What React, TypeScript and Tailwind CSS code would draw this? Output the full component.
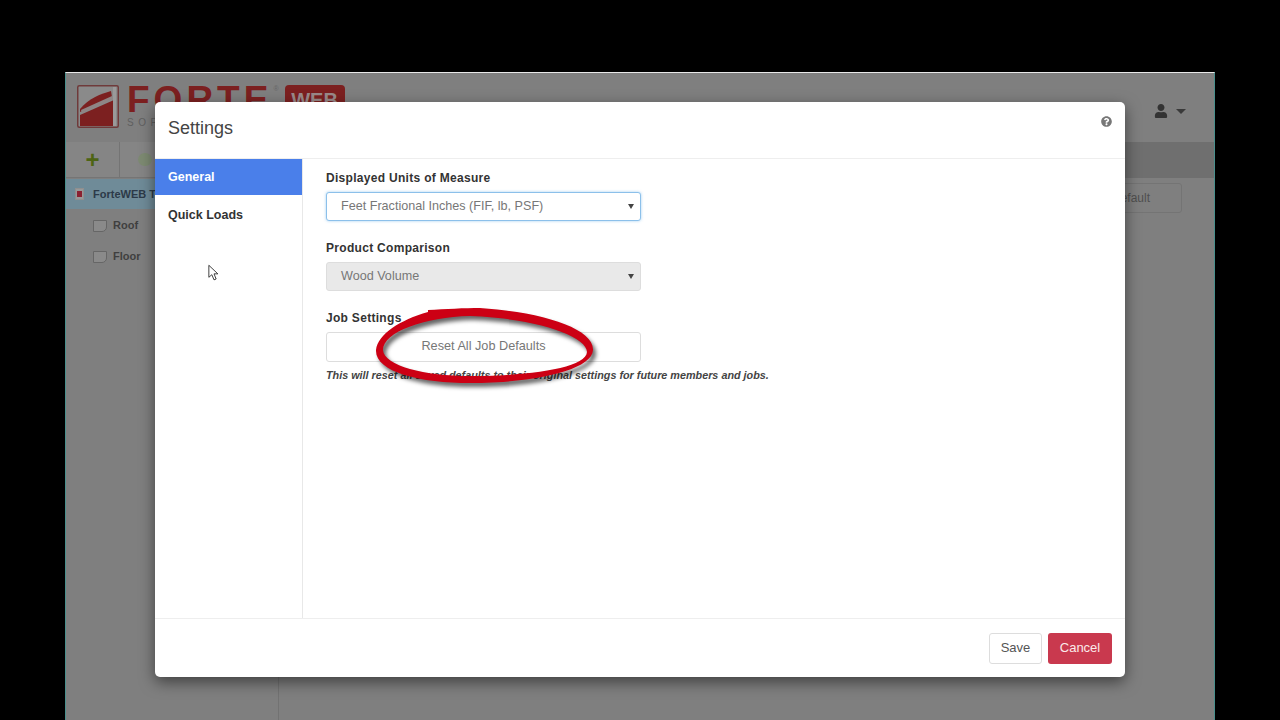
import { FaQuestionCircle, FaUser } from "react-icons/fa";

const font = "font-['Liberation_Sans',Arial,sans-serif]";

function Logo() {
  return (
    <svg width="42" height="43" viewBox="0 0 42 43" className="shrink-0">
      <rect x="0.75" y="0.75" width="40.5" height="41.5" rx="1.5" fill="#8a8a8a" stroke="#6f3a3a" strokeWidth="1.5" />
      <path d="M3 41V30L37 15v26z" fill="#7c2020" />
      <path d="M3 24C12 13 24 9 34 6l1 6L3 27z" fill="#7c2020" />
      <path d="M4 25L35 11l1 3L5 28z" fill="#8f8585" />
      <path d="M36 2h3v39h-3z" fill="#9a9a9a" />
    </svg>
  );
}

function PageIcon() {
  return (
    <span className="flex h-[12px] w-[9px] items-center justify-center border border-[#8f8f8f] bg-[#999]">
      <span className="h-[6px] w-[5px] bg-[#8a2030]" />
    </span>
  );
}

function TreeRow({ label }: { label: string }) {
  return (
    <div className="flex h-[31px] items-center gap-[6px] pl-[27px] text-[11px] font-bold text-[#3f3f3f]">
      <span className="h-[12px] w-[14px] rounded-br-[5px] border border-[#666] bg-[#8a8a8a]" />
      {label}
    </div>
  );
}

function FieldLabel({ children }: { children: string }) {
  return <div className="text-[12px] font-bold leading-[14px] tracking-[0.3px] text-[#333]">{children}</div>;
}

function SelectBox({ value, focused }: { value: string; focused?: boolean }) {
  return (
    <div
      className={
        focused
          ? "mt-[7px] flex h-[29px] w-[315px] items-center justify-between rounded-[3px] border border-[#8cc0ea] bg-white pl-[14px] pr-[6px] shadow-[0_0_3px_rgba(102,175,233,0.6)]"
          : "mt-[7px] flex h-[29px] w-[315px] items-center justify-between rounded-[3px] border border-[#ddd] bg-[#e9e9e9] pl-[14px] pr-[6px]"
      }
    >
      <span className="text-[12.6px] text-[#777]">{value}</span>
      <span className="h-0 w-0 border-x-[3px] border-t-[5px] border-x-transparent border-t-[#444]" />
    </div>
  );
}

// hand-drawn red ring around the reset button
function Ellipse() {
  return (
    <svg
      width="235"
      height="90"
      viewBox="0 0 235 90"
      className="absolute left-[44px] top-[-32px] drop-shadow-[3px_4px_2px_rgba(0,0,0,0.6)]"
    >
      <path
        fillRule="evenodd"
        fill="#cc0014"
        d="M6 50C8 34 30 20 58 12L58 10C75 9 95 8 110 8C170 12 224 28 223 50C222 70 165 83 100 83C50 83 5 72 6 50ZM13 50C14 66 55 76 100 76C160 76 216 68 217 52C217 36 165 18 100 16C55 17 13 32 13 50Z"
      />
    </svg>
  );
}

export default function App() {
  return (
    <div className={`${font} h-[720px] w-[1280px] overflow-hidden bg-black pl-[65px] pr-[65px] pt-[72px]`}>
      <div className="relative h-[648px] w-[1150px] border-x border-t border-x-[#4a8f8c] border-t-[#e8e8e8] bg-[#7f7f7f]">
        <header className="flex h-[69px] items-start pl-[11px] pt-[12px]">
          <Logo />
          <div className="ml-[8px]">
            <div className="text-[37px] font-bold leading-[30px] tracking-[4px] text-[#7c2020]">FORTE</div>
            <div className="mt-[3px] text-[10px] leading-[10px] tracking-[4.5px] text-[#5f5f5f]">SOFTWARE</div>
          </div>
          <div className="ml-[1px] text-[7px] leading-[8px] text-[#666]">®</div>
          <div className="ml-[6px] h-[30px] w-[60px] rounded-[4px] bg-[#7c2020] text-center text-[20px] font-bold leading-[30px] text-[#9a8a8a]">
            WEB
          </div>
          <div className="ml-auto mr-[28px] mt-[19px] flex items-center gap-[8px]">
            <FaUser size={14} className="text-[#333]" />
            <span className="h-0 w-0 border-x-[5.5px] border-t-[5px] border-x-transparent border-t-[#3a3a3a]" />
          </div>
        </header>

        <div className="flex h-[36px]">
          <div className="flex h-full w-[213px] items-center border-b border-[#757575] bg-[#858585]">
            <div className="flex h-full w-[54px] items-center justify-center border-r border-[#747474] text-[24px] font-bold leading-none text-[#4d6414]">
              +
            </div>
            <div className="ml-[18px] h-[13px] w-[14px] rounded-full bg-[#7d8a72]" />
          </div>
          <div className="flex-1 bg-[#6f6f6f]" />
        </div>

        <div className="w-[213px]">
          <div className="mt-px flex h-[30px] items-center gap-[9px] bg-[#6f8b98] pl-[9px] text-[11px] font-bold text-[#2c3a48]">
            <PageIcon />
            ForteWEB Training
          </div>
          <div className="pt-px">
            <TreeRow label="Roof" />
            <TreeRow label="Floor" />
          </div>
        </div>

        <div className="absolute bottom-0 left-[212px] h-[44px] w-px bg-[#727272]" />

        <div className="absolute right-[32px] top-[110px] flex h-[30px] w-[90px] items-center justify-end rounded-[3px] border border-[#747474] pr-[31px] text-[12px] text-[#4f4f4f]">
          Default
        </div>

        <div className="absolute left-[89px] top-[29px] flex h-[575px] w-[970px] flex-col overflow-hidden rounded-[5px] bg-white shadow-[0_5px_15px_rgba(0,0,0,0.5)]">
          <div className="flex h-[57px] shrink-0 items-start justify-between border-b border-[#eee] pl-[13px] pr-[13px]">
            <div className="pt-[16px] text-[18px] leading-[20px] text-[#444]">Settings</div>
            <FaQuestionCircle size={11} className="mt-[14px] text-[#777]" />
          </div>

          <div className="flex min-h-0 flex-1">
            <nav className="w-[148px] shrink-0 border-r border-[#e8e8e8] text-[12.5px] font-bold">
              <div className="flex h-[36px] items-center bg-[#4a7fea] pl-[13px] text-white">General</div>
              <div className="flex h-[40px] items-center pl-[13px] text-[#333]">Quick Loads</div>
            </nav>
            <div className="flex-1 pl-[23px] pt-[12px]">
              <FieldLabel>Displayed Units of Measure</FieldLabel>
              <SelectBox value="Feet Fractional Inches (FIF, lb, PSF)" focused />
              <div className="mt-[20px]">
                <FieldLabel>Product Comparison</FieldLabel>
              </div>
              <SelectBox value="Wood Volume" />
              <div className="mt-[20px]">
                <FieldLabel>Job Settings</FieldLabel>
              </div>
              <div className="relative">
                <div className="mt-[7px] flex h-[30px] w-[315px] items-center justify-center rounded-[3px] border border-[#ddd] bg-white text-[12.7px] text-[#777]">
                  Reset All Job Defaults
                </div>
                <div className="mt-[6px] text-[10.8px] font-bold italic leading-[14px] text-[#444]">
                  This will reset all saved defaults to their original settings for future members and jobs.
                </div>
                <Ellipse />
              </div>
            </div>
          </div>

          <div className="flex h-[59px] shrink-0 items-center justify-end gap-[6px] border-t border-[#eee] pr-[13px]">
            <div className="flex h-[31px] w-[53px] items-center justify-center rounded-[3px] border border-[#ddd] bg-white text-[13px] text-[#555]">
              Save
            </div>
            <div className="flex h-[31px] w-[64px] items-center justify-center rounded-[3px] bg-[#c9394e] text-[13px] text-[#fbeaea]">
              Cancel
            </div>
          </div>
        </div>

        <svg width="12" height="18" viewBox="0 0 14 20" className="absolute left-[142px] top-[191px]">
          <path d="M1 1v14l3.5-3 2.5 6 2.5-1-2.5-6h4.5z" fill="#fff" stroke="#222" strokeWidth="1" />
        </svg>
      </div>
    </div>
  );
}
